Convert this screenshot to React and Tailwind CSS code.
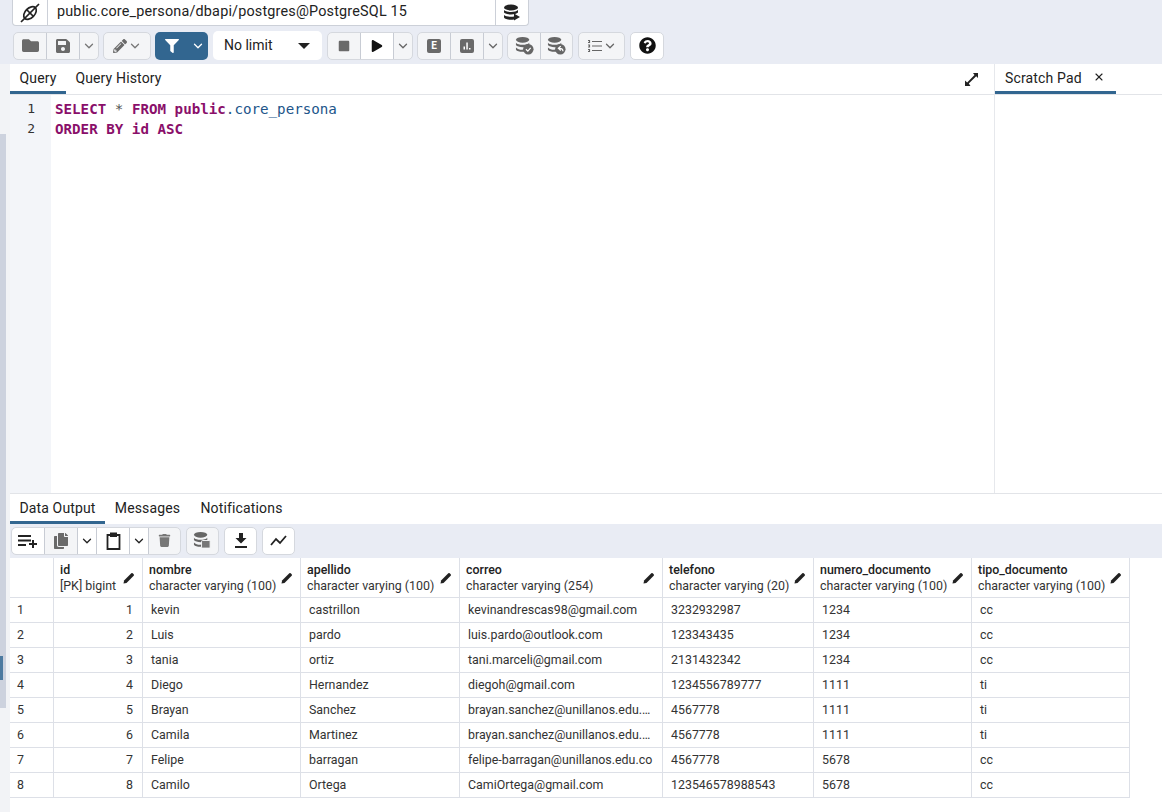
import React from "react";
import { ChevronDown, X } from "lucide-react";
import { FaFolder, FaSave, FaPencilAlt, FaFilter, FaStop, FaPlay, FaTrash, FaQuestionCircle, FaCopy } from "react-icons/fa";

const Chev = ({ c = "text-[#444]" }) => <ChevronDown size={14} strokeWidth={2.2} className={c} />;

const Seg = ({ w, children, last }) => (
  <div className={`h-full flex items-center justify-center ${last ? "" : "border-r border-[#c8ccd4]"} ${w}`}>{children}</div>
);
const Group = ({ children, bg = "bg-[#f4f5f7]" }) => (
  <div className={`h-[27.500px] flex items-stretch rounded-[5px] border border-[#d5d8de] ${bg}`}>{children}</div>
);

const DbIcon = ({ overlay, size = 19 }) => (
  <svg width={size} height={size} viewBox="0 0 20 20">
    <ellipse cx="8" cy="4" rx="7" ry="3" fill="#666" />
    <path d="M1 7c2 3 12 3 14 0v2.500c-2 3-12 3-14 0zM1 12c2 2.500 7 2.800 9 2v2.500c-3 .5-8 0-9-2z" fill="#666" />
    {overlay === "check" && (<g><circle cx="14" cy="14" r="5.500" fill="#666" /><path d="M11.500 14l2 2 3-3.500" stroke="#fff" strokeWidth="1.300" fill="none" /></g>)}
    {overlay === "back" && (<g><circle cx="14" cy="14" r="5.500" fill="#666" /><path d="M16.800 16c0-2.500-2-3-4-3M14.500 10.800l-2.500 2.200 2.500 2.200" stroke="#fff" strokeWidth="1.300" fill="none" /></g>)}
    {overlay === "save" && (<rect x="9" y="10" width="9" height="8" rx="1" fill="#777" stroke="#f4f5f7" />)}
  </svg>
);

const Tab = ({ children, active, w }) => (
  <div className={`h-full flex items-center justify-center text-[14px] tracking-[0.15px] text-[#222] ${w} ${active ? "border-b-[3px] border-[#326690] pt-[2px]" : "pb-[1px]"}`}>{children}</div>
);

const cols = [
  ["w-[44px]", "", ""],
  ["w-[89px]", "id", "[PK] bigint"],
  ["w-[158px]", "nombre", "character varying (100)"],
  ["w-[159px]", "apellido", "character varying (100)"],
  ["w-[203px]", "correo", "character varying (254)"],
  ["w-[151px]", "telefono", "character varying (20)"],
  ["w-[158px]", "numero_documento", "character varying (100)"],
  ["w-[158px]", "tipo_documento", "character varying (100)"],
];
const rows = [
  ["1", "kevin", "castrillon", "kevinandrescas98@gmail.com", "3232932987", "1234", "cc"],
  ["2", "Luis", "pardo", "luis.pardo@outlook.com", "123343435", "1234", "cc"],
  ["3", "tania", "ortiz", "tani.marceli@gmail.com", "2131432342", "1234", "cc"],
  ["4", "Diego", "Hernandez", "diegoh@gmail.com", "1234556789777", "1111", "ti"],
  ["5", "Brayan", "Sanchez", "brayan.sanchez@unillanos.edu.co", "4567778", "1111", "ti"],
  ["6", "Camila", "Martinez", "brayan.sanchez@unillanos.edu.co", "4567778", "1111", "ti"],
  ["7", "Felipe", "barragan", "felipe-barragan@unillanos.edu.co", "4567778", "5678", "cc"],
  ["8", "Camilo", "Ortega", "CamiOrtega@gmail.com", "123546578988543", "5678", "cc"],
];

const PencilIcon = () => (
  <svg width="12" height="12" viewBox="0 0 12 12" className="shrink-0"><path d="M0.500 11.500l.6-3L8.300 1.300a1 1 0 0 1 1.400 0l1 1a1 1 0 0 1 0 1.400L3.500 10.900z" fill="#222" /></svg>
);

export default function App() {
  return (
    <div className="w-[1162px] h-[812px] overflow-hidden flex bg-white text-[#222]" style={{ fontFamily: "Roboto, sans-serif" }}>
      {/* left strip */}
      <div className="w-[10px] h-full bg-[#f2f3f6] flex flex-col shrink-0">
        <div className="h-[134px] w-[6px]" />
        <div className="w-[6px] h-[574px] bg-[#cdd2de] flex flex-col pt-[522px]">
          <div className="w-[3px] h-[24px] bg-[#4d7aa0]" />
        </div>
      </div>
      <div className="flex-1 min-w-0 flex flex-col">
        {/* header bars */}
        <div className="bg-[#e9ecf4] h-[64px] -ml-[10px] pl-[10px] shrink-0 flex flex-col">
          <div className="h-[26px] w-[517px] ml-[2px] flex items-stretch rounded-b-[4px] border border-t-0 border-[#ccd0d8] bg-white">
            <div className="w-[35px] border-r border-[#ccd0d8] flex items-center justify-center">
              <svg width="20" height="20" viewBox="0 0 20 20" fill="none" stroke="#222" strokeWidth="1.700"><path d="M1 19L4.500 15.500M15.500 4.500L19 1" /><ellipse cx="10" cy="10" rx="7.500" ry="4.800" transform="rotate(-45 10 10)" /><path d="M4.500 15.500L15.500 4.500" /><path d="M6.500 6.500L13.500 13.500" /></svg>
            </div>
            <div className="flex-1 pl-[9px] text-[14.4px] leading-[24px] tracking-[0.18px] whitespace-nowrap">public.core_persona/dbapi/postgres@PostgreSQL 15</div>
            <div className="w-[33px] border-l border-[#ccd0d8] flex items-center justify-center">
              <svg width="18" height="18" viewBox="0 0 18 18"><ellipse cx="8" cy="3.500" rx="7" ry="3" fill="#222" /><path d="M1 6c2 2.500 12 2.500 14 0v2.500c-2 2.500-12 2.500-14 0zM1 11c2 2 8 2 10 1.500v3c-4 .8-9 0-10-2z" fill="#222" /><path d="M11 9.500l6 3.500-6 3.500z" fill="#222" /></svg>
            </div>
          </div>
          <div className="h-[28px] mt-[6px] ml-[3px] flex items-start">
            <Group>
              <Seg w="w-[33px]"><FaFolder size={17} className="text-[#6a6a6a]" /></Seg>
              <Seg w="w-[33px]"><FaSave size={16} className="text-[#6a6a6a]" /></Seg>
              <Seg w="w-[18px]" last><Chev c="text-[#777]" /></Seg>
            </Group>
            <div className="ml-[4px]"><Group>
              <Seg w="w-[46px]" last><div className="flex items-center gap-[1px]"><FaPencilAlt size={14} className="text-[#6a6a6a]" /><Chev c="text-[#777]" /></div></Seg>
            </Group></div>
            <div className="ml-[4px] h-[28px] w-[53px] rounded-[5px] bg-[#326690] flex items-center justify-between pl-[10px] pr-[3px]">
              <FaFilter size={14} className="text-white" /><Chev c="text-white" />
            </div>
            <div className="ml-[5px] -mt-[1px] h-[29px] w-[109px] bg-white rounded-[5px] flex items-center pl-[11px] pr-[12px] justify-between text-[14px]">
              <span>No limit</span>
              <span className="w-0 h-0 border-l-[6px] border-r-[6px] border-t-[6px] border-l-transparent border-r-transparent border-t-[#222]" />
            </div>
            <div className="ml-[5px]"><Group>
              <Seg w="w-[33px]"><FaStop size={12} className="text-[#6a6a6a]" /></Seg>
              <Seg w="w-[33px]"><div className="w-full h-full bg-white flex items-center justify-center"><FaPlay size={12} className="text-[#111]" /></div></Seg>
              <Seg w="w-[18px]" last><Chev c="text-[#666]" /></Seg>
            </Group></div>
            <div className="ml-[4px]"><Group>
              <Seg w="w-[33px]"><span className="w-[14px] h-[14px] rounded-[2px] bg-[#6a6a6a] text-white text-[10px] font-bold flex items-center justify-center">E</span></Seg>
              <Seg w="w-[33px]"><svg width="14" height="14" viewBox="0 0 14 14"><rect width="14" height="14" rx="2" fill="#6a6a6a" /><path d="M3.500 10.500h1.500v-3h-1.500zM6.300 10.500h1.500v-7h-1.500zM9 10.500h1.500v-1.500h-1.500z" fill="#fff" /></svg></Seg>
              <Seg w="w-[18px]" last><Chev c="text-[#666]" /></Seg>
            </Group></div>
            <div className="ml-[4px]"><Group>
              <Seg w="w-[33px]"><DbIcon overlay="check" /></Seg>
              <Seg w="w-[31px]" last><DbIcon overlay="back" /></Seg>
            </Group></div>
            <div className="ml-[5px]"><Group>
              <Seg w="w-[45px]" last><div className="flex items-center"><svg width="16" height="14" viewBox="0 0 16 14" fill="none" stroke="#666" strokeWidth="1.200"><path d="M5 2.500h10M5 7h10M5 11.500h10M1 1.500h1.500v2H1M1 6h1.500v2H1M1 10.500h1.500v2H1" /></svg><Chev c="text-[#666]" /></div></Seg>
            </Group></div>
            <div className="ml-[5px]"><Group bg="bg-white">
              <Seg w="w-[32px]" last><FaQuestionCircle size={17} className="text-[#111]" /></Seg>
            </Group></div>
          </div>
        </div>

        {/* query area */}
        <div className="h-[429px] flex shrink-0">
          <div className="w-[985px] flex flex-col border-r border-[#e6e8ec] shrink-0">
            <div className="h-[31px] flex items-stretch border-b border-[#e2e4e8] shrink-0">
              <Tab active w="w-[56px]">Query</Tab>
              <Tab w="w-[105px]">Query History</Tab>
              <div className="flex-1 flex items-center justify-end pr-[15px]"><svg width="15" height="15" viewBox="0 0 15 15" fill="#222"><path d="M9 1h5v5l-1.800-1.800-7.400 7.400L6.500 14H1V8.500l2.200 2 7.300-7.500z" /></svg></div>
            </div>
            <div className="flex-1 flex">
              <div className="w-[41px] bg-[#f3f5f9] pt-[4px] text-[13px] leading-[20px] text-[#333] text-right pr-[16px] font-['DejaVu_Sans_Mono',monospace]">
                <div>1</div><div>2</div>
              </div>
              <div className="pl-[4px] pt-[4px] text-[14.2px] leading-[20px] whitespace-pre font-['DejaVu_Sans_Mono',monospace]">
                <div><b className="text-[#8a0f6a]">SELECT</b> <span className="text-[#555]">*</span> <b className="text-[#8a0f6a]">FROM public</b><span className="text-[#22558a]">.core_persona</span></div>
                <div><b className="text-[#8a0f6a]">ORDER BY id ASC</b></div>
              </div>
            </div>
          </div>
          <div className="flex-1 flex flex-col">
            <div className="h-[31px] border-b border-[#e2e4e8] flex items-stretch shrink-0">
              <div className="w-[121px] h-full border-b-[3px] border-[#326690] flex items-center pl-[10px] text-[14px] tracking-[0.15px] gap-[11px] pt-[2px]">
                <span>Scratch Pad</span><X size={12} strokeWidth={2.200} className="-mt-[3px]" />
              </div>
            </div>
          </div>
        </div>

        {/* output */}
        <div className="flex-1 min-h-0 flex flex-col border-t border-[#e2e4e8]">
          <div className="h-[30px] flex items-stretch shrink-0">
            <Tab active w="w-[95px]">Data Output</Tab>
            <Tab w="w-[85px]">Messages</Tab>
            <Tab w="w-[103px]">Notifications</Tab>
          </div>
          <div className="h-[34px] bg-[#e9ecf4] flex items-start pt-[3px] pl-[1px] shrink-0">
            <Group bg="bg-[#f4f5f7]">
              <Seg w="w-[33px]"><div className="w-full h-full bg-white rounded-l-[5px] flex items-center justify-center"><svg width="20" height="14" viewBox="0 0 20 14" fill="#222"><path d="M0 1h13v2H0zM0 5.500h13v2H0zM0 10h8v2H0zM14 6h2v3h3v2h-3v3h-2v-3h-3v-2h3z" /></svg></div></Seg>
              <Seg w="w-[33px]"><FaCopy size={16} className="text-[#6a6a6a]" /></Seg>
              <Seg w="w-[19px]"><div className="w-full h-full bg-white flex items-center justify-center"><Chev c="text-[#222]" /></div></Seg>
              <Seg w="w-[33px]"><div className="w-full h-full bg-white flex items-center justify-center"><svg width="15" height="18" viewBox="0 0 15 18" fill="none" stroke="#222" strokeWidth="1.800"><path d="M4.500 3H1.500v14h12V3H10.500" /><rect x="4.500" y="1" width="6" height="3.500" fill="#222" strokeWidth="1" /></svg></div></Seg>
              <Seg w="w-[19px]"><div className="w-full h-full bg-white flex items-center justify-center"><Chev c="text-[#222]" /></div></Seg>
              <Seg w="w-[31px]" last><FaTrash size={13} className="text-[#777]" /></Seg>
            </Group>
            <div className="ml-[5px]"><Group><Seg w="w-[31px]" last><DbIcon overlay="save" /></Seg></Group></div>
            <div className="ml-[5px]"><Group bg="bg-white"><Seg w="w-[31px]" last><svg width="14" height="15" viewBox="0 0 14 15" fill="#222"><path d="M5 0h4v5h3.500L7 10.500 1.500 5H5zM1 13h12v2H1z" /></svg></Seg></Group></div>
            <div className="ml-[5px]"><Group bg="bg-white"><Seg w="w-[31px]" last><svg width="18" height="12" viewBox="0 0 18 12" fill="none" stroke="#222" strokeWidth="1.800"><path d="M1 10l5-6 4 4 6-7" /></svg></Seg></Group></div>
          </div>
          <div className="flex-1 min-h-0 text-[12.4px] text-[#333]">
            <div className="flex h-[40px] w-[1120px] border-b border-[#dde0e7]">
              {cols.map((c, i) => (
                <div key={i} className={`${c[0]} shrink-0 border-r border-[#dde0e7] flex items-center pl-[6px] pr-[7px] ${i === 0 ? "" : "justify-between"}`}>
                  {i > 0 && <div className="leading-[15.500px] whitespace-nowrap"><div className="font-medium text-[#222]">{c[1]}</div><div>{c[2]}</div></div>}
                  {i > 0 && <PencilIcon />}
                </div>
              ))}
            </div>
            {rows.map((r, ri) => (
              <div key={ri} className="flex h-[25px] border-b border-[#dde0e7] w-[1120px]">
                <div className="w-[44px] shrink-0 border-r border-[#dde0e7] pl-[7px] leading-[24px]">{r[0]}</div>
                <div className="w-[89px] shrink-0 border-r border-[#dde0e7] pr-[9px] text-right leading-[24px]">{r[0]}</div>
                {r.slice(1).map((v, i) => (
                  <div key={i} className={`${cols[i + 2][0]} shrink-0 border-r border-[#dde0e7] pl-[8px] pr-[7px] leading-[24px] truncate`}>{v}</div>
                ))}
              </div>
            ))}
          </div>
        </div>
      </div>
    </div>
  );
}
